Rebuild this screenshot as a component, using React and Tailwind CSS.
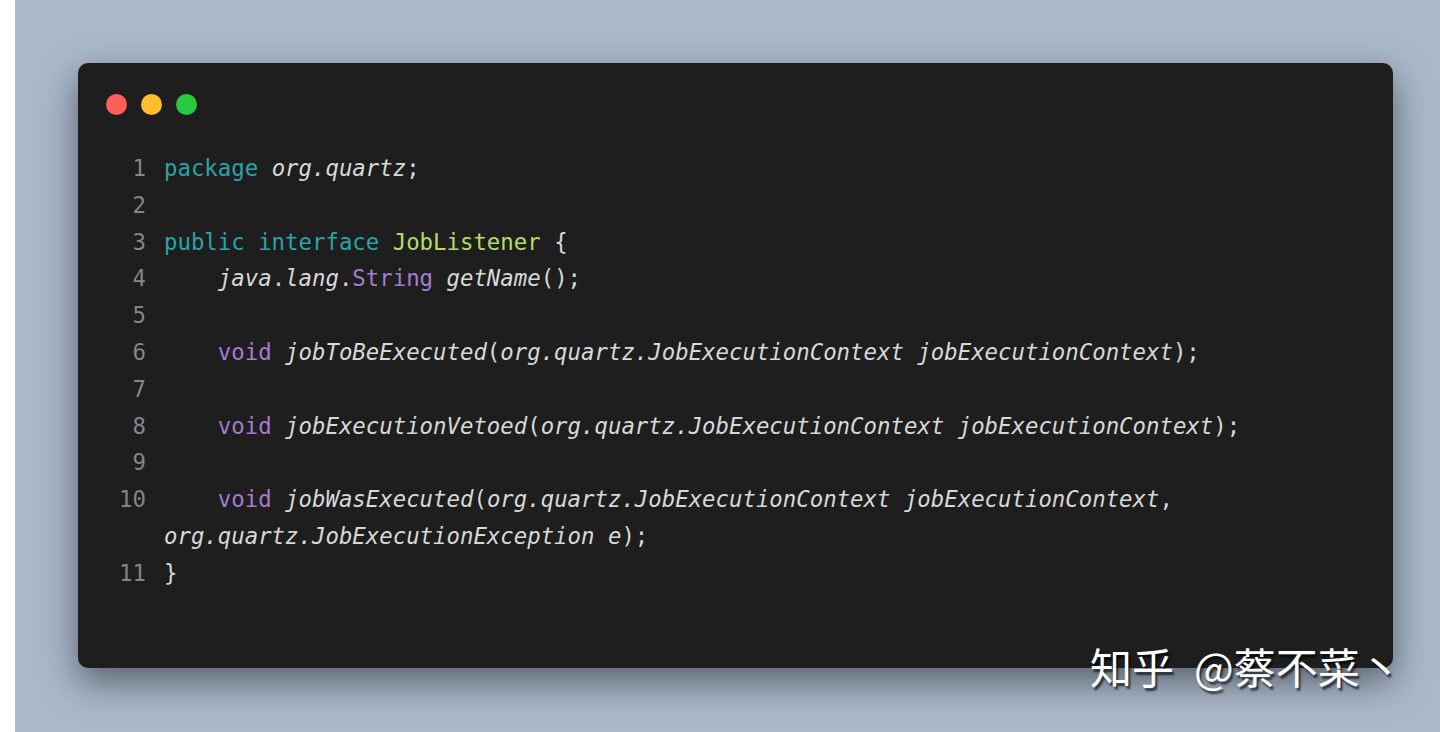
const TEAL = 'text-[#2aa4a8]'
const GREEN = 'text-[#b4dc68]'
const PURPLE = 'text-[#a67bcf]'
const IT = 'italic'

// each row: [lineNumber or null, tokens]
const ROWS = [
  ['1', [['package', TEAL], [' '], ['org.quartz', IT], [';']]],
  ['2', []],
  ['3', [['public', TEAL], [' '], ['interface', TEAL], [' '], ['JobListener', GREEN], [' {']]],
  ['4', [['    '], ['java', IT], ['.'], ['lang', IT], ['.'], ['String', PURPLE], [' '], ['getName', IT], ['();']]],
  ['5', []],
  ['6', [['    '], ['void', PURPLE], [' '], ['jobToBeExecuted', IT], ['('], ['org.quartz.JobExecutionContext jobExecutionContext', IT], [');']]],
  ['7', []],
  ['8', [['    '], ['void', PURPLE], [' '], ['jobExecutionVetoed', IT], ['('], ['org.quartz.JobExecutionContext jobExecutionContext', IT], [');']]],
  ['9', []],
  ['10', [['    '], ['void', PURPLE], [' '], ['jobWasExecuted', IT], ['('], ['org.quartz.JobExecutionContext jobExecutionContext', IT], [',']]],
  [null, [['org.quartz.JobExecutionException e', IT], [');']]],
  ['11', [['}']]],
]

function CodeRow({ num, tokens }) {
  return (
    <div className="flex h-[36.8px] items-center">
      <span className="w-[27px] mr-[18px] text-right text-[#858585]">{num ?? ''}</span>
      <span className="whitespace-pre text-[#d8d8d8]">
        {tokens.map(([text, cls], i) => (
          <span key={i} className={cls}>{text}</span>
        ))}
      </span>
    </div>
  )
}

export default function App() {
  return (
    <div className="flex h-[732px] w-full overflow-hidden bg-white">
      <div className="w-[15px] shrink-0 bg-white" />
      <div className="relative flex-1 bg-[#abb8c9] pl-[63px] pr-[47px] pt-[63px] pb-[64px]">
        <div className="h-full rounded-[10px] bg-[#1e1e1e] shadow-[0_14px_36px_rgba(20,25,35,0.55)]">
          {/* window buttons */}
          <div className="flex gap-[14px] pl-[28px] pt-[31px]">
            <span className="h-[21px] w-[21px] rounded-full bg-[#ff5f57]" />
            <span className="h-[21px] w-[21px] rounded-full bg-[#febc2e]" />
            <span className="h-[21px] w-[21px] rounded-full bg-[#28c840]" />
          </div>

          {/* code */}
          <div className="mt-[35px] pl-[41px] font-['DejaVu_Sans_Mono','Liberation_Mono',monospace] text-[22.35px] leading-[36.8px]">
            {ROWS.map(([num, tokens], i) => (
              <CodeRow key={i} num={num} tokens={tokens} />
            ))}
          </div>
        </div>

        {/* watermark */}
        <div className="absolute left-[1075px] top-[645px] flex whitespace-nowrap font-['Noto_Sans_CJK_SC',sans-serif] text-[42px] leading-none text-white [text-shadow:2px_3px_2px_rgba(0,0,0,0.65)]">
          <span>知乎</span>
          <span className="ml-[20px]">@蔡不菜丶</span>
        </div>
      </div>
    </div>
  )
}
